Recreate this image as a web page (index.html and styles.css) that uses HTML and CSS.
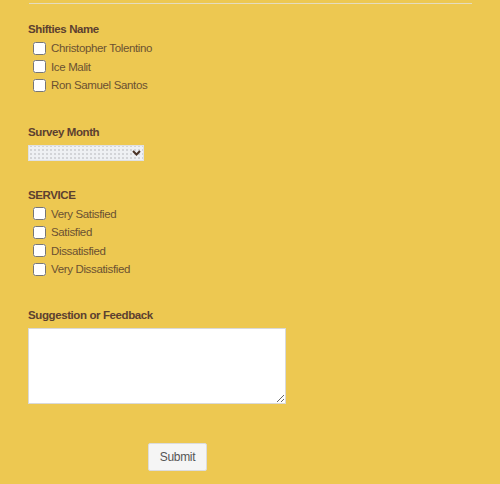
FILE: index.html
```html
<!DOCTYPE html>
<html>
<head>
<meta charset="utf-8">
<link rel="stylesheet" href="styles.css">
</head>
<body>
<form class="form">
  <div class="rule"></div>
  <div class="field field-first">
    <div class="label">Shifties Name</div>
    <label class="opt"><input type="checkbox"><span>Christopher Tolentino</span></label>
    <label class="opt"><input type="checkbox"><span>Ice Malit</span></label>
    <label class="opt"><input type="checkbox"><span>Ron Samuel Santos</span></label>
  </div>
  <div class="field field-month">
    <div class="label">Survey Month</div>
    <div class="select"><span class="chev"><svg width="9" height="6" viewBox="0 0 9 6"><path d="M1 1 L4.5 4.5 L8 1" fill="none" stroke="#4a3326" stroke-width="2"/></svg></span></div>
  </div>
  <div class="field field-service">
    <div class="label">SERVICE</div>
    <label class="opt"><input type="checkbox"><span>Very Satisfied</span></label>
    <label class="opt"><input type="checkbox"><span>Satisfied</span></label>
    <label class="opt"><input type="checkbox"><span>Dissatisfied</span></label>
    <label class="opt"><input type="checkbox"><span>Very Dissatisfied</span></label>
  </div>
  <div class="field field-feedback">
    <div class="label">Suggestion or Feedback</div>
    <textarea class="area"></textarea>
  </div>
  <div class="actions">
    <button type="button" class="submit">Submit</button>
  </div>
</form>
</body>
</html>
```
FILE: styles.css
```css
html, body {
  margin: 0;
  padding: 0;
  background: #edc851;
  height: 100%;
}
body {
  font-family: "Liberation Sans", Arial, sans-serif;
  font-size: 11.5px;
  letter-spacing: -0.35px;
  color: #6b5132;
}
.form {
  padding: 0 28px;
}
.rule {
  height: 0;
  border-top: 1px solid #e4dcbf;
  margin: 3px 0 0 1px;
}
.field {
  display: flex;
  flex-direction: column;
}
.field-first {
  margin-top: 18px;
}
.field-month {
  margin-top: 30px;
}
.field-service {
  margin-top: 27px;
}
.field-feedback {
  margin-top: 29px;
}
.label {
  font-weight: bold;
  color: #5c4030;
  font-size: 11.5px;
  letter-spacing: -0.4px;
  line-height: 14px;
  margin-bottom: 3px;
}
.opt {
  display: flex;
  align-items: center;
  height: 18.5px;
}
.opt input {
  width: 13px;
  height: 13px;
  margin: 0 5px 0 5px;
}
.opt span {
  line-height: 14px;
}
.select {
  width: 112px;
  height: 14px;
  margin-top: 3px;
  border: 1px solid #dfe1e4;
  background-color: #eef0f3;
  background-image: radial-gradient(circle, #c3c4c8 0.6px, transparent 0.9px);
  background-size: 4px 4px;
  background-position: 0 2px;
  display: flex;
  justify-content: flex-end;
  align-items: center;
  padding-right: 2px;
}
.chev {
  display: flex;
}
.area {
  width: 252px;
  height: 70px;
  margin: 3px 0 0 0;
  border: 1px solid #d9d9d9;
  background: #fff;
  padding: 2px;
}
.actions {
  padding-left: 120px;
  margin-top: 39px;
}
.submit {
  width: 59px;
  height: 28px;
  background: #f5f5f5;
  border: 1px solid #dcdcdc;
  border-radius: 2px;
  color: #555;
  font-family: "Liberation Sans", Arial, sans-serif;
  font-size: 12px;
  letter-spacing: -0.3px;
}
```
